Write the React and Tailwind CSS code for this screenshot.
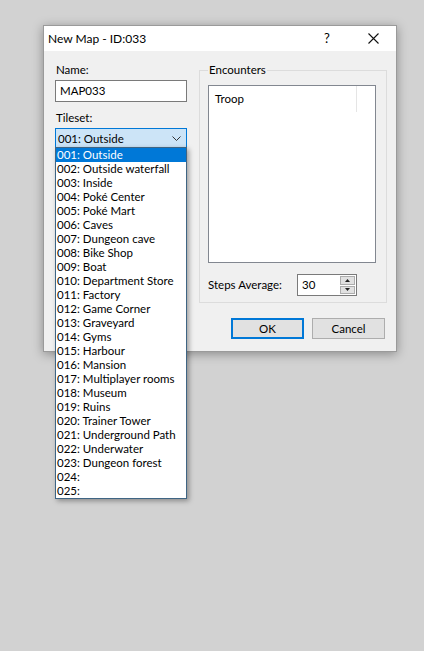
const tilesets = [
  '001: Outside',
  '002: Outside waterfall',
  '003: Inside',
  '004: Poké Center',
  '005: Poké Mart',
  '006: Caves',
  '007: Dungeon cave',
  '008: Bike Shop',
  '009: Boat',
  '010: Department Store',
  '011: Factory',
  '012: Game Corner',
  '013: Graveyard',
  '014: Gyms',
  '015: Harbour',
  '016: Mansion',
  '017: Multiplayer rooms',
  '018: Museum',
  '019: Ruins',
  '020: Trainer Tower',
  '021: Underground Path',
  '022: Underwater',
  '023: Dungeon forest',
  '024:',
  '025:',
]

function App() {
  return (
    <div className="min-h-screen bg-[#d2d2d2] pl-[43px] pt-[25px] font-['Lato',sans-serif] text-[11.5px] text-black">
      <div className="relative h-[327px] w-[354px] border border-[#9a9a9a] bg-[#f0f0f0] shadow-[0_2px_10px_rgba(0,0,0,0.35)]">
        {/* title bar */}
        <div className="flex h-[25px] items-center bg-white pl-[4px] text-[12px]">
          <span className="flex-1 leading-none">New Map - ID:033</span>
          <span className="w-[46px] text-center text-[13px]">?</span>
          <span className="flex w-[46px] justify-center">
            <svg width="11" height="11" viewBox="0 0 11 11" stroke="#111" strokeWidth="1.1">
              <path d="M0.5 0.5 L10.5 10.5 M10.5 0.5 L0.5 10.5" />
            </svg>
          </span>
        </div>

        {/* body */}
        <div className="flex gap-[12px] pl-[11px] pt-[11px]">
          <div className="flex w-[132px] flex-col">
            <label className="h-[16px] leading-[16px] pl-[1px]">Name:</label>
            <div className="mt-[2px] flex h-[22px] items-center border border-[#7a7a7a] bg-white pl-[4px]">MAP033</div>
            <label className="mt-[8px] h-[16px] leading-[16px] pl-[1px]">Tileset:</label>
            <div className="relative mt-[2px] flex h-[21px] items-center border border-[#0078d7] bg-[#cce4f7] pl-[2px]">
              <span className="flex-1">001: Outside</span>
              <svg className="mr-[5px]" width="9" height="6" viewBox="0 0 9 6" fill="none" stroke="#333" strokeWidth="1">
                <path d="M0.5 0.5 L4.5 4.5 L8.5 0.5" />
              </svg>
              {/* dropdown list */}
              <div className="absolute left-[-1px] top-[18px] z-10 w-[132px] border border-[#3f6584] bg-white shadow-[2px_2px_5px_rgba(0,0,0,0.35)]">
                {tilesets.map((t, i) => (
                  <div
                    key={t}
                    className={
                      i === 0
                        ? 'h-[14px] overflow-hidden whitespace-nowrap bg-[#0078d7] pl-[1px] leading-[14px] text-white'
                        : 'h-[14px] overflow-hidden whitespace-nowrap pl-[1px] leading-[14px]'
                    }
                  >
                    {t}
                  </div>
                ))}
              </div>
            </div>
          </div>

          <div className="flex flex-col">
            <fieldset className="mt-[1px] h-[240px] w-[188px] border border-[#dcdcdc] px-[8px] pt-[8px]">
              <legend className="px-[1px] leading-[14px]">Encounters</legend>
              <div className="relative h-[178px] w-[168px] border border-[#828790] bg-white">
                <div className="pl-[6px] pt-[5px] leading-[16px]">Troop</div>
                <div className="absolute right-[18px] top-0 h-[26px] w-px bg-[#e5e5e5]" />
              </div>
              <div className="mt-[11px] flex items-center">
                <span className="w-[89px] whitespace-nowrap">Steps Average:</span>
                <div className="flex h-[22px] w-[60px] border border-[#7a7a7a] bg-white">
                  <span className="flex-1 pl-[4px] leading-[20px]">30</span>
                  <div className="flex w-[17px] flex-col gap-px p-px">
                    <div className="flex flex-1 items-center justify-center border border-[#adadad] bg-[#e1e1e1]">
                      <svg width="5" height="3" viewBox="0 0 5 3"><path d="M0 3 L2.5 0 L5 3 Z" fill="#222" /></svg>
                    </div>
                    <div className="flex flex-1 items-center justify-center border border-[#adadad] bg-[#e1e1e1]">
                      <svg width="5" height="3" viewBox="0 0 5 3"><path d="M0 0 L2.5 3 L5 0 Z" fill="#222" /></svg>
                    </div>
                  </div>
                </div>
              </div>
            </fieldset>
            <div className="mt-[15px] flex gap-[8px] pl-[32px]">
              <button className="h-[21px] w-[73px] border-2 border-[#0078d7] bg-[#e1e1e1]">OK</button>
              <button className="h-[21px] w-[73px] border border-[#adadad] bg-[#e1e1e1]">Cancel</button>
            </div>
          </div>
        </div>
      </div>
    </div>
  )
}

export default App
